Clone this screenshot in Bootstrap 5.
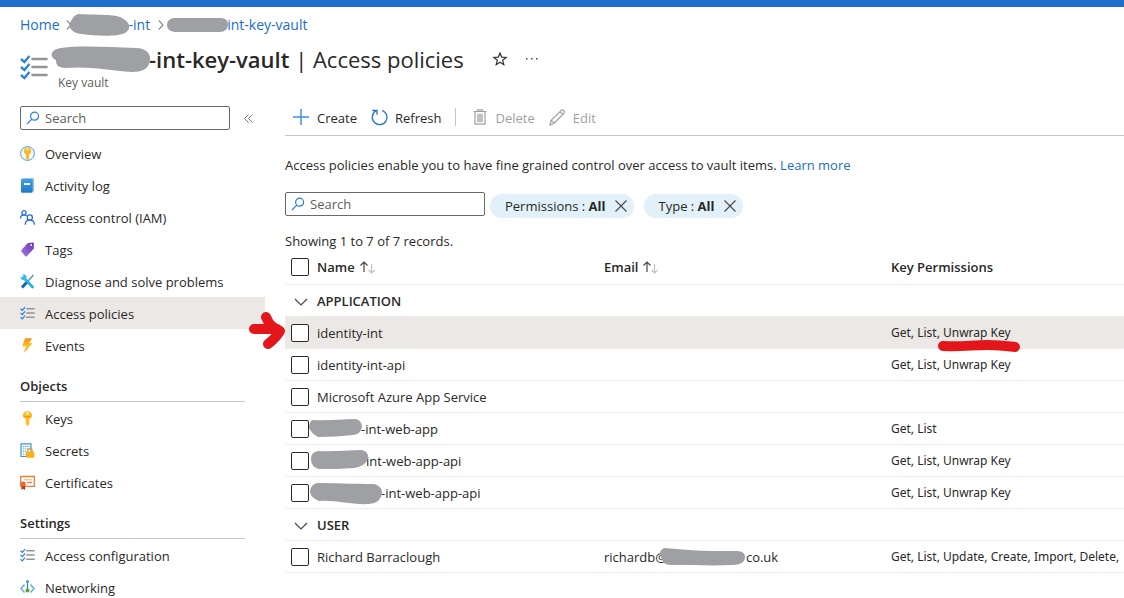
<!DOCTYPE html>
<html lang="en">
<head>
<meta charset="utf-8">
<meta name="viewport" content="width=device-width, initial-scale=1">
<title>Access policies</title>
<link rel="stylesheet" href="https://cdn.jsdelivr.net/npm/bootstrap@5.3.0/dist/css/bootstrap.min.css">
<style>
:root { --ink: #292827; --azure: #1a6fc8; --blot: #9fa0a4; --rule: #c8c6c4; --hover: #ebe8e6; }
body { font: 13px/20px "Open Sans", "Noto Sans", sans-serif; color: var(--ink); background: #fff; }
a { color: var(--azure); text-decoration: none; }
svg { display: block; overflow: visible; flex: none; }
.topbar { height: 7px; background: #1e6fcc; }
.crumbs { height: 36px; padding-left: 20px; font-size: 14px; }
.crumbs .step { margin: 0 3px 0 8px; }
.crumbs .step:first-of-type { margin: 0 0 0 6px; }
.blot { fill: var(--blot); position: relative; z-index: 1; }
.page-head { height: 56px; padding-left: 20px; }
.page-head h1 { font-size: 22px; line-height: 32px; font-weight: 400; }
.page-head h1 b { font-weight: 600; }
.page-head .kind { font-size: 12px; line-height: 16px; color: #605e5c; padding-left: 10px; }
.head-icon { margin-top: 11px; }
.head-tools { gap: 19px; padding-left: 29px; }
.bare { border: 0; background: none; padding: 0; color: inherit; }
.sidebar { width: 265px; flex: none; padding-top: 7px; }
.find { height: 24px; border: 1px solid #6b6a69; border-radius: 2px; padding: 0 5px; gap: 5px; }
.find input { border: 0; outline: 0; padding: 0; min-width: 0; flex: 1; background: none; color: var(--ink); line-height: 20px; }
.find input::placeholder { color: #605e5c; opacity: 1; }
.find-side { width: 210px; }
.find-main { width: 200px; }
.side-top { padding-left: 20px; margin-bottom: 7px; gap: 14px; }
.side-item { height: 32px; padding: 2px 0 0 20px; gap: 10px; color: var(--ink); }
.side-item svg { margin-top: -2px; }
.side-item.current { background: var(--hover); }
.side-title { font-size: 13px; line-height: 20px; font-weight: 600; margin: 0 20px 0 20px; padding: 15px 0 5px; height: 41px; border-bottom: 1px solid var(--rule); }
.content { min-width: 0; padding-left: 20px; }
.tools { height: 37px; border-bottom: 1px solid var(--rule); padding: 2px 0 0 7px; }
.tools button { gap: 7px; }
.tools button + button { margin-left: 14px; }
.tools button:disabled { color: #a19f9d; }
.tools svg { margin-top: -2px; }
.vr-line { width: 1px; height: 18px; background: var(--rule); margin: -2px 16px 0 14px; }
.intro { margin: 19px 0 17px; }
.pill { height: 24px; border-radius: 12px; background: #e2f0fa; padding: 0 7px 0 15px; gap: 9px; }
.pills { gap: 10px; padding: 2px 0 0 5px; margin-bottom: -2px; }
.count { margin: 15px 0 0; line-height: 20px; }
.policies { width: 100%; table-layout: fixed; border-collapse: separate; border-spacing: 0; }
.policies th, .policies td { height: 32px; padding: 0; border-bottom: 1px solid #edebe9; white-space: nowrap; vertical-align: middle; }
.policies th { font-weight: 600; }
.policies thead th { height: 34px; padding-bottom: 2px; }
.policies .pick-col { width: 32px; }
.policies .text-col { width: 287px; }
.policies td:nth-child(4) { font-family: "Noto Sans", sans-serif; font-size: 12px; }
.policies tr.picked td { background: var(--hover); }
.policies input { appearance: none; display: block; width: 18px; height: 18px; margin: 0 0 0 6px; border: 1px solid #292827; border-radius: 2px; background: #fff; }
.policies .fold { margin-left: 9px; }
.mark-arrow { position: absolute; left: -36px; top: -5px; fill: none; stroke: #e3171b; }
.mark-line { position: absolute; left: 46px; top: 23px; fill: none; stroke: #e3171b; }
</style>
</head>
<body class="vh-100 overflow-hidden">
<svg width="0" height="0" class="position-absolute" aria-hidden="true">
  <defs>
    <linearGradient id="gold" x1="0" y1="0" x2="0" y2="1"><stop offset="0" stop-color="#fdb827"/><stop offset="1" stop-color="#fcc12a"/></linearGradient>
    <linearGradient id="violet" x1="1" y1="0" x2="0" y2="1"><stop offset="0" stop-color="#6a32b8"/><stop offset="1" stop-color="#a67ae0"/></linearGradient>
    <linearGradient id="bookfill" x1="0" y1="0" x2="0" y2="1"><stop offset="0" stop-color="#3fa0e6"/><stop offset="1" stop-color="#2179c9"/></linearGradient>
    <linearGradient id="boltfill" x1="0" y1="0" x2="0" y2="1"><stop offset="0" stop-color="#f78d1e"/><stop offset=".6" stop-color="#fdc81d"/><stop offset="1" stop-color="#fd9a1f"/></linearGradient>
  </defs>
  <symbol id="i-list" viewBox="0 0 28 26">
    <g fill="none" stroke="#2f83dc" stroke-width="2.4"><path d="M1 5l3.4 3L9.400 2M1 13l3.400 3 5-6M1 21l3.400 3 5-6"/></g>
    <g stroke="#979593" stroke-width="2.6" stroke-linecap="round"><path d="M12.500 5h14M12.500 13h14M12.500 21h14"/></g>
  </symbol>
  <symbol id="i-search" viewBox="0 0 14 14"><g fill="none" stroke="#2a7fd4" stroke-width="1.2"><circle cx="8.600" cy="5.200" r="4"/><path d="M5.800 8.200L1 13"/></g></symbol>
  <symbol id="i-key" viewBox="0 0 15 15"><path fill="url(#gold)" d="M7.500.2c2.600 0 4.700 1.700 4.700 4.100 0 1.800-1.100 3.100-2.900 3.800v5.200l-1.800 1.600-1.800-1.600V8.100C3.900 7.400 2.800 6.100 2.800 4.300 2.800 1.900 4.900.2 7.500.2z"/><circle cx="7.500" cy="2.500" r="1.200" fill="#fff"/><path d="M5 5.500h5" stroke="#e8860c" stroke-width=".8"/></symbol>
  <symbol id="i-sort" viewBox="0 0 17 14"><path d="M5 12V2M1.500 5.500L5 2l3.500 3.500" fill="none" stroke="#494847" stroke-width="1.200"/><path d="M12.500 4v9M9.500 10l3 3 3-3" fill="none" stroke="#c3c1bf" stroke-width="1.200"/></symbol>
  <symbol id="i-x" viewBox="0 0 12 12"><path d="M.5.5l11 11M11.500.5l-11 11" fill="none" stroke="#484644" stroke-width="1.100"/></symbol>
  <symbol id="i-down" viewBox="0 0 14 8"><path d="M1 1l6 6 6-6" fill="none" stroke="#484644" stroke-width="1.200"/></symbol>
  <symbol id="i-next" viewBox="0 0 6 10"><path d="M.8.5L5 5 .8 9.500" fill="none" stroke="#8a8886" stroke-width="1.100"/></symbol>
</svg>

<div class="topbar"></div>
<header>
  <nav class="crumbs d-flex align-items-center" aria-label="Breadcrumb">
    <a href="#">Home</a>
    <svg class="step" width="6" height="10"><use href="#i-next"/></svg>
    <svg class="blot" width="57" height="22"><path d="M7 0C24 1 44 0 50 4C58 8 60 15 53 19C44 23 24 22 10 20C3 20-3 15-3 11C-1 7 2 0 7 0z"/></svg>
    <a href="#">-int</a>
    <svg class="step" width="6" height="10"><use href="#i-next"/></svg>
    <svg class="blot" width="60" height="14"><path d="M7 0H54Q61 0 61 7Q60 14 53 14H8Q0 13 0 7Q0 1 7 0z"/></svg>
    <a href="#">int-key-vault</a>
  </nav>
  <div class="page-head d-flex">
    <svg class="head-icon" width="28" height="26"><use href="#i-list"/></svg>
    <div>
      <div class="d-flex align-items-center">
        <svg class="blot" width="101" height="26"><path d="M13 2C34-1 60 1 88 2C98 2 103 8 102 14C101 23 94 26 84 26C60 24 40 20 18 22C9 22 8 18 8 14C2 11 1 4 13 2z"/></svg>
        <h1 class="mb-0"><b>-int-key-vault</b> | Access policies</h1>
        <div class="head-tools d-flex align-items-center">
          <button class="bare" type="button" aria-label="Favorite"><svg width="14" height="14" viewBox="0 0 14 14"><path d="M7 1l1.700 4.100 4.400.3-3.400 2.900 1.100 4.400L7 10.300l-3.800 2.400 1.100-4.400L.9 5.400l4.400-.3z" fill="none" stroke="#323130" stroke-width="1.200"/></svg></button>
          <button class="bare" type="button" aria-label="More"><svg width="12" height="2" viewBox="0 0 12 2"><path d="M0 0h1.500v1.500H0zM5 0h1.500v1.500H5zM10 0h1.500v1.500H10z" fill="#484644"/></svg></button>
        </div>
      </div>
      <div class="kind">Key vault</div>
    </div>
  </div>
</header>

<div class="d-flex">
  <aside class="sidebar">
    <div class="side-top d-flex align-items-center">
      <label class="find find-side d-flex align-items-center"><svg width="14" height="14"><use href="#i-search"/></svg><input type="text" placeholder="Search" aria-label="Search menu"></label>
      <button class="bare" type="button" aria-label="Collapse menu"><svg width="9" height="9" viewBox="0 0 9 9"><path d="M4.500.5l-4 4 4 4M8.500.5l-4 4 4 4" fill="none" stroke="#797775"/></svg></button>
    </div>
    <nav aria-label="Resource menu">
      <a class="side-item d-flex align-items-center" href="#"><svg width="15" height="15" viewBox="0 0 15 15"><circle cx="7.500" cy="7.500" r="6.900" fill="#f3f9fd" stroke="#4b9bd8"/><path fill="#fdb827" d="M7.500 1.600a3.700 3.500 0 0 1 1.700 6.600v4.300l-1.700 1.400-1.700-1.400V8.200a3.700 3.500 0 0 1 1.700-6.600z"/><circle cx="7.500" cy="3.500" r=".9" fill="#fff"/></svg>Overview</a>
      <a class="side-item d-flex align-items-center" href="#"><svg width="15" height="15" viewBox="0 0 15 15"><path d="M3 .3h11v13H3z" fill="#8fc0e8"/><rect x="1" y=".8" width="11.600" height="14" rx="1" fill="url(#bookfill)"/><path d="M4 5h6v2H4z" fill="#fff"/></svg>Activity log</a>
      <a class="side-item d-flex align-items-center" href="#"><svg width="15" height="15" viewBox="0 0 15 15"><g fill="none" stroke="#2d6fd0" stroke-width="1.300"><circle cx="4" cy="2.700" r="2.100"/><path d="M.6 8.500C.6 6 2 4.900 4 4.900c1.200 0 2 .3 2.600 1"/><circle cx="9.800" cy="7.500" r="2.600"/><path d="M5.200 14.800c0-3 2-4.600 4.600-4.600s4.600 1.600 4.600 4.600"/></g></svg>Access control (IAM)</a>
      <a class="side-item d-flex align-items-center" href="#"><svg width="15" height="15" viewBox="0 0 15 15"><path d="M7.500 1.200L12.500.5q1.300-.1 1.400 1.200l-.2 5L6.800 14.200q-.8.6-1.500 0L1.400 9.500q-.5-.8.1-1.500z" fill="url(#violet)"/><circle cx="11.200" cy="3" r=".9" fill="#fff"/></svg>Tags</a>
      <a class="side-item d-flex align-items-center" href="#"><svg width="15" height="15" viewBox="0 0 15 15"><path d="M13.500 1L8 7" stroke="#4a8fb8" stroke-width="1.200"/><path d="M7.500 7.500L2 13.500" stroke="#1769a8" stroke-width="3"/><path d="M3.500 3.500l9 9.500" stroke="#2bb3dd" stroke-width="2.800" stroke-linecap="round"/><path d="M2.500 0L4 2.500 2.500 4 .5 2.500Q.5 6 4 6.200 7 5 6.500 2 5 .2 2.500 0z" fill="#35bfe4"/></svg>Diagnose and solve problems</a>
      <a class="side-item current d-flex align-items-center" aria-current="page" href="#"><svg width="15" height="14"><use href="#i-list"/></svg>Access policies</a>
      <a class="side-item d-flex align-items-center" href="#"><svg width="15" height="15" viewBox="0 0 15 15"><path d="M5 .2h7L9.200 5.200h3.300L3.800 15l2-6.800H2.300z" fill="url(#boltfill)"/></svg>Events</a>
      <h2 class="side-title">Objects</h2>
      <a class="side-item d-flex align-items-center" href="#"><svg width="15" height="15"><use href="#i-key"/></svg>Keys</a>
      <a class="side-item d-flex align-items-center" href="#"><svg width="15" height="15" viewBox="0 0 15 15"><path d="M1 .8h10v12.700H1z" fill="#edf7fd" stroke="#3f9ad0" stroke-width="1.200"/><path d="M3 3.500h6.500M3 6h6.500M3 8.500h3M3 11h2" stroke="#5fa9da" stroke-dasharray="1.200 .8"/><path d="M7.800 9V7.500a2.200 2.200 0 0 1 4.400 0V9" fill="none" stroke="#e9a21a" stroke-width="1.300"/><rect x="5.800" y="9" width="8.600" height="5.800" rx=".8" fill="#fbb11f"/></svg>Secrets</a>
      <a class="side-item d-flex align-items-center" href="#"><svg width="15" height="15" viewBox="0 0 15 15"><path d="M.7 1.500h13.600v9.800H.7z" fill="#fff" stroke="#e8823a" stroke-width="1.300"/><path d="M4 4.700h8" stroke="#f3c9a8" stroke-width="1.500"/><path d="M7 7.500h5" stroke="#d98a55" stroke-width="1.500"/><path d="M1.500 10h3.600v5l-1.800-1.200L1.500 15z" fill="#b52d1d"/><circle cx="3.200" cy="9" r="2.600" fill="#ee6a2c"/></svg>Certificates</a>
      <h2 class="side-title">Settings</h2>
      <a class="side-item d-flex align-items-center" href="#"><svg width="15" height="14"><use href="#i-list"/></svg>Access configuration</a>
      <a class="side-item d-flex align-items-center" href="#"><svg width="15" height="15" viewBox="0 0 15 15"><path d="M4.500 4.500L1 8.500l3.500 4M10.500 4.500l3.500 4-3.500 4" fill="none" stroke="#62b1d6" stroke-width="1.500"/><path d="M7.500 2v8" stroke="#3a86b5" stroke-width="1.300"/><circle cx="7.500" cy="1.600" r="1.500" fill="#4a9cc4"/><circle cx="7.500" cy="10.500" r="2" fill="#5fa32a"/></svg>Networking</a>
    </nav>
  </aside>

  <main class="content flex-grow-1">
    <div class="tools d-flex align-items-center">
      <button class="bare d-flex align-items-center" type="button"><svg width="18" height="16" viewBox="0 0 18 16"><path d="M9 0v16M1 8h16" stroke="#3f93dd" stroke-width="1.500"/></svg>Create</button>
      <button class="bare d-flex align-items-center" type="button"><svg width="17" height="17" viewBox="0 0 17 17"><path d="M11.200 1.300A7.400 7.400 0 1 1 5 1.800M1.300 1.500H6v4.300" fill="none" stroke="#2076d2" stroke-width="1.300"/></svg>Refresh</button>
      <div class="vr-line"></div>
      <button class="bare d-flex align-items-center" type="button" disabled><svg width="16" height="16" viewBox="0 0 16 16"><g fill="none" stroke="#a19f9d" stroke-width="1.200"><path d="M1.500 2.500h13M5.500 2.500V.8h5v1.700M3 2.500v12.700h10V2.500"/></g><path d="M5 4.800h6v8.400H5z" fill="#c2c0be"/></svg>Delete</button>
      <button class="bare d-flex align-items-center" type="button" disabled><svg width="17" height="17" viewBox="0 0 17 17"><path d="M1 16l1.200-4.800L12.300 1.400q1.200-1 2.500.1 1.200 1.300.2 2.600L5.200 14.200zM2.200 11.200l3 3M11 2.700l3 3" fill="none" stroke="#a19f9d" stroke-width="1.200"/></svg>Edit</button>
    </div>
    <p class="intro">Access policies enable you to have fine grained control over access to vault items. <a href="#">Learn more</a></p>
    <div class="d-flex align-items-center">
      <label class="find find-main d-flex align-items-center"><svg width="14" height="14"><use href="#i-search"/></svg><input type="text" placeholder="Search" aria-label="Search policies"></label>
      <div class="pills d-flex">
        <button class="bare pill d-flex align-items-center" type="button"><span>Permissions : <b>All</b></span><svg width="12" height="12"><use href="#i-x"/></svg></button>
        <button class="bare pill d-flex align-items-center" type="button"><span>Type : <b>All</b></span><svg width="12" height="12"><use href="#i-x"/></svg></button>
      </div>
    </div>
    <p class="count">Showing 1 to 7 of 7 records.</p>
    <table class="policies">
      <thead>
        <tr>
          <th class="pick-col"><input type="checkbox" aria-label="Select all"></th>
          <th class="text-col"><div class="d-flex align-items-center gap-1">Name <svg width="17" height="14"><use href="#i-sort"/></svg></div></th>
          <th class="text-col"><div class="d-flex align-items-center gap-1">Email <svg width="17" height="14"><use href="#i-sort"/></svg></div></th>
          <th>Key Permissions</th>
        </tr>
      </thead>
      <tbody>
        <tr><td><button class="bare fold" type="button" aria-label="Collapse applications"><svg width="14" height="8"><use href="#i-down"/></svg></button></td><th colspan="3" scope="rowgroup">APPLICATION</th></tr>
        <tr class="picked">
          <td class="position-relative"><input type="checkbox" aria-label="identity-int"><svg class="mark-arrow" width="36" height="38" viewBox="0 0 36 38"><path d="M5 17H28M17 5L20 11Q23 15 31 19Q27 26 19 32" stroke-width="10" stroke-linecap="round" stroke-linejoin="round"/></svg></td>
          <td>identity-int</td><td></td>
          <td class="position-relative">Get, List, Unwrap Key<svg class="mark-line" width="82" height="12" viewBox="0 0 82 12"><path d="M6 6C25 7 35 5 50 5C63 5 70 6 78 7" stroke-width="10" stroke-linecap="round"/></svg></td>
        </tr>
        <tr><td><input type="checkbox" aria-label="identity-int-api"></td><td>identity-int-api</td><td></td><td>Get, List, Unwrap Key</td></tr>
        <tr><td><input type="checkbox" aria-label="Microsoft Azure App Service"></td><td>Microsoft Azure App Service</td><td></td><td></td></tr>
        <tr><td><input type="checkbox" aria-label="Web app"></td><td><div class="d-flex align-items-center"><svg class="blot" width="44" height="18"><path d="M-4 0C12 1 24-1 39-1Q45 1 45 7Q44 14 36 15C25 16 14 17 1 17Q-5 14-8 8Q-8 1-4 0z"/></svg>-int-web-app</div></td><td></td><td>Get, List</td></tr>
        <tr><td><input type="checkbox" aria-label="First web app API"></td><td><div class="d-flex align-items-center"><svg class="blot" width="49" height="18"><path d="M1-1C16 0 30-2 45-2Q52 0 51 6Q49 14 37 16C25 17 14 17 2 17Q-6 15-6 7Q-6 0 1-1z"/></svg>int-web-app-api</div></td><td></td><td>Get, List, Unwrap Key</td></tr>
        <tr><td><input type="checkbox" aria-label="Second web app API"></td><td><div class="d-flex align-items-center"><svg class="blot" width="64" height="18"><path d="M0-1C18-1 35 0 57 0Q65 2 65 9Q64 19 52 20C34 21 20 16 2 17Q-6 14-7 8Q-7 1 0-1z"/></svg>-int-web-app-api</div></td><td></td><td>Get, List, Unwrap Key</td></tr>
        <tr><td><button class="bare fold" type="button" aria-label="Collapse users"><svg width="14" height="8"><use href="#i-down"/></svg></button></td><th colspan="3" scope="rowgroup">USER</th></tr>
        <tr><td><input type="checkbox" aria-label="Richard Barraclough"></td><td>Richard Barraclough</td><td><div class="d-flex align-items-center">richardb@<svg class="blot" width="79" height="18"><path d="M-3 0C14 1 30 3 46 3H71Q79 4 78 10Q77 17 66 17C46 18 26 17 4 17Q-5 17-6 8Q-9 3-3 0z"/></svg>co.uk</div></td><td>Get, List, Update, Create, Import, Delete,</td></tr>
      </tbody>
    </table>
  </main>
</div>
<script src="https://cdn.jsdelivr.net/npm/bootstrap@5.3.0/dist/js/bootstrap.bundle.min.js"></script>
</body>
</html>
